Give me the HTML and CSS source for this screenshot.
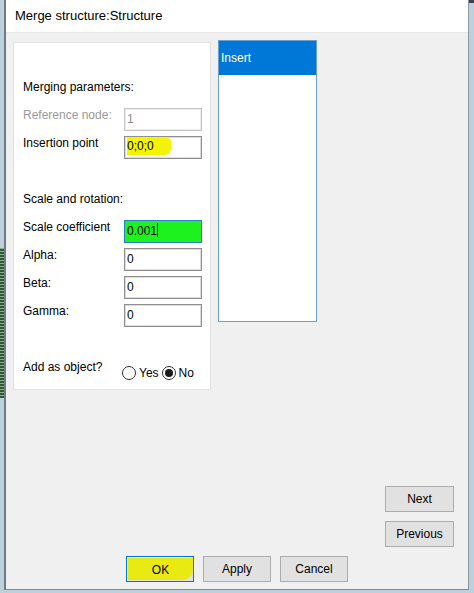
FILE: index.html
```html
<html>
<head>
<meta charset="utf-8">
<title>Merge structure:Structure</title>
<link rel="stylesheet" href="styles.css">
</head>
<body>
<div class="screen">
  <div class="desk-left"><div class="moss"></div></div>
  <div class="window">
    <div class="titlebar">Merge structure:Structure</div>
    <div class="client">
      <div class="top">
        <div class="panel">
          <div class="group">Merging parameters:</div>
          <div class="row first">
            <span class="lbl disabled">Reference node:</span>
            <div class="field off">1</div>
          </div>
          <div class="row">
            <span class="lbl">Insertion point</span>
            <div class="field"><span class="mark">0;0;0</span></div>
          </div>
          <div class="group second">Scale and rotation:</div>
          <div class="row first">
            <span class="lbl">Scale coefficient</span>
            <div class="field focus">0.001<span class="caret"></span></div>
          </div>
          <div class="row">
            <span class="lbl">Alpha:</span>
            <div class="field">0</div>
          </div>
          <div class="row">
            <span class="lbl">Beta:</span>
            <div class="field">0</div>
          </div>
          <div class="row">
            <span class="lbl">Gamma:</span>
            <div class="field">0</div>
          </div>
          <div class="row obj">
            <span class="lbl">Add as object?</span>
            <div class="radios">
              <span class="radio"></span><span class="rtext">Yes</span>
              <span class="radio on"></span><span class="rtext">No</span>
            </div>
          </div>
        </div>
        <div class="list">
          <div class="list-item">Insert</div>
        </div>
      </div>
      <div class="nav">
        <div class="btn">Next</div>
        <div class="btn">Previous</div>
      </div>
      <div class="actions">
        <div class="btn ok"><span class="okmark">OK</span></div>
        <div class="btn">Apply</div>
        <div class="btn">Cancel</div>
      </div>
    </div>
  </div>
  <div class="desk-right"></div>
</div>
</body>
</html>
```

FILE: styles.css
```css
* {
  box-sizing: border-box;
}
body {
  margin: 0;
  font-family: "Liberation Sans", Arial, sans-serif;
  font-size: 12px;
  color: #000;
}
.screen {
  display: flex;
  width: 474px;
  height: 593px;
  background: #bfd0dd;
  overflow: hidden;
}
.desk-left {
  width: 4px;
  flex: none;
}
.moss {
  margin-top: 248px;
  height: 150px;
  background: repeating-linear-gradient(0deg, #2f5a35 0 2px, #8fae8c 2px 3px);
}
.window {
  width: 465px;
  height: 590px;
  flex: none;
  display: flex;
  flex-direction: column;
  background: #f0f0f0;
  border-left: 2px solid #6e7a85;
  border-right: 1px solid #8b96a0;
  border-bottom: 1px solid #7c8792;
}
.desk-right {
  flex: 1;
  border-top: 3px solid #3d4248;
}
.titlebar {
  height: 33px;
  line-height: 31px;
  background: #fff;
  padding-left: 9px;
  font-size: 13px;
  border-bottom: 1px solid #e8e8e8;
}
.client {
  flex: 1;
  display: flex;
  flex-direction: column;
  padding: 7px 14px 7px 7px;
}
.top {
  display: flex;
  gap: 7px;
}
.panel {
  width: 198px;
  height: 348px;
  margin-top: 2px;
  background: #fff;
  border: 1px solid #e2e2e2;
  padding: 0 8px 0 9px;
}
.group {
  margin-top: 37px;
  height: 16px;
}
.group.second {
  margin-top: 33px;
}
.row {
  display: flex;
  justify-content: space-between;
  height: 23px;
  margin-top: 5px;
}
.row.first {
  margin-top: 12px;
}
.lbl.disabled {
  color: #9a9a9a;
}
.field {
  width: 78px;
  height: 23px;
  line-height: 21px;
  padding-left: 2px;
  border: 1px solid #8f8f8f;
  box-shadow: inset 0 0 0 1px #dcdcdc;
  background: #fff;
}
.field.off {
  border-color: #c4c4c4;
  box-shadow: inset 0 0 0 1px #ececec;
  color: #8c8c8c;
}
.field.focus {
  border-color: #2c7fd0;
  box-shadow: none;
  background: #1ef21e;
}
.caret {
  display: inline-block;
  width: 1px;
  height: 14px;
  vertical-align: -2px;
  background: #000;
}
.mark {
  display: inline-block;
  width: 44px;
  height: 17px;
  margin-top: 1px;
  line-height: 17px;
  background: #f4f400;
  border-radius: 0 4px 6px 0;
}
.row.obj {
  margin-top: 33px;
}
.radios {
  display: flex;
  align-items: center;
  height: 14px;
  margin-top: 6px;
  width: 80px;
}
.radio {
  flex: none;
  width: 14px;
  height: 14px;
  border: 1px solid #333;
  border-radius: 50%;
  background: #fff;
  position: relative;
}
.radio.on::after {
  content: "";
  position: absolute;
  left: 2px;
  top: 2px;
  width: 8px;
  height: 8px;
  border-radius: 50%;
  background: #1a1a1a;
}
.rtext {
  margin: 0 3px;
}
.list {
  width: 99px;
  height: 282px;
  background: #fff;
  border: 1px solid #6a9fd4;
}
.list-item {
  height: 34px;
  line-height: 34px;
  padding-left: 2px;
  background: #0078d7;
  color: #fff;
}
.nav {
  margin-top: auto;
  display: flex;
  flex-direction: column;
  align-items: flex-end;
  gap: 9px;
}
.btn {
  width: 69px;
  height: 26px;
  line-height: 24px;
  text-align: center;
  background: #e1e1e1;
  border: 1px solid #adadad;
}
.actions {
  display: flex;
  gap: 9px;
  margin: 9px 0 0 113px;
}
.actions .btn {
  width: 68px;
}
.btn.ok {
  border-color: #0078d7;
}
.okmark {
  display: block;
  height: 22px;
  margin: 1px 0 0 1px;
  background: #e8ea12;
  border-radius: 0 0 10px 0;
}
```
